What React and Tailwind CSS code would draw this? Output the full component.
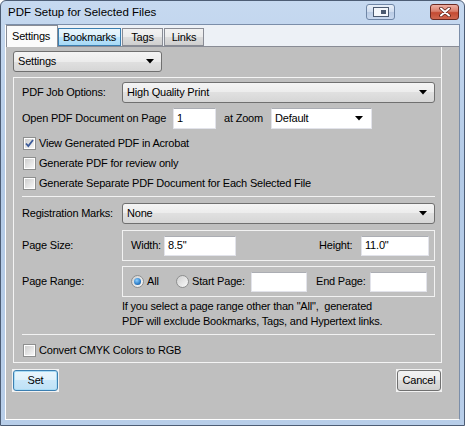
import React from 'react';

const font = "font-['Liberation_Sans',Arial,sans-serif]";

function Arrow() {
  return (
    <svg width="8" height="5" viewBox="0 0 8 5" className="shrink-0">
      <path d="M0 0h8L4 4.5z" fill="#000" />
    </svg>
  );
}

function Combo({ value, className = '' }) {
  return (
    <div
      className={`flex items-center justify-between h-[21px] pl-[4px] pr-[7px] rounded-[3px] border border-[#707070]
                  bg-[linear-gradient(#f4f4f4,#ececec_50%,#e0e0e0_50%,#d6d6d6)] ${className}`}
    >
      <span>{value}</span>
      <Arrow />
    </div>
  );
}

function Field({ value = '', className = '' }) {
  return (
    <div
      className={`h-[20px] bg-white border border-[#e2e3ea] border-t-[#abadb3] pl-[3px] flex items-center ${className}`}
    >
      {value}
    </div>
  );
}

function Check({ checked, label }) {
  return (
    <div className="flex items-center h-5">
      <div className="ml-px w-[13px] h-[13px] border border-[#8e8f8f] p-px bg-white shrink-0">
        <div className="w-full h-full bg-[linear-gradient(135deg,#cfcfcf,#f6f6f6)] flex items-center justify-center">
          {checked && (
            <svg width="9" height="9" viewBox="0 0 9 9">
              <path d="M1 4.5l2.3 2.5L8 1" fill="none" stroke="#3b5a99" strokeWidth="1.8" />
            </svg>
          )}
        </div>
      </div>
      <span className="ml-[3px]">{label}</span>
    </div>
  );
}

function Radio({ checked }) {
  return (
    <div className="w-[13px] h-[13px] rounded-full border border-[#8e8f8f] bg-[linear-gradient(135deg,#cfcfcf,#fafafa)] flex items-center justify-center shrink-0">
      {checked && (
        <div className="w-[7px] h-[7px] rounded-full bg-[radial-gradient(circle_at_40%_35%,#8fd0ff,#2b7cc7_60%,#14467f)]" />
      )}
    </div>
  );
}

function Row({ label, children, className = '' }) {
  return (
    <div className={`flex items-center ${className}`}>
      <span className="w-[100px] shrink-0">{label}</span>
      {children}
    </div>
  );
}

export default function App() {
  return (
    <div
      className={`${font} text-[11px] tracking-[-0.2px] text-black w-[465px] h-[426px] flex flex-col rounded-t-[6px] border border-[#4d5d75]
                  bg-[linear-gradient(#c6d9f0,#b3cae6_40%,#b8cee9)] px-[4px] pb-[5px]`}
    >
      {/* Title bar */}
      <div className="h-[23px] flex items-start justify-between pl-[3px] pr-px shrink-0">
        <span className="text-[11.5px] tracking-normal mt-[6px] leading-none">PDF Setup for Selected Files</span>
        <div className="flex items-start mt-[3px]">
          <div className="w-[29px] h-[16px] rounded-[3px] border border-[#6f86a6] bg-[linear-gradient(#e9f0f9,#cfdcee_50%,#b9cbe4_50%,#c8d8ee)] flex items-center justify-center">
            <svg width="16" height="10" viewBox="0 0 16 10">
              <rect x="0.5" y="0.5" width="15" height="9" fill="#f4f7fb" stroke="#4b5a70" />
              <rect x="8" y="3" width="5" height="4" fill="#4b5a70" />
            </svg>
          </div>
          <div className="ml-[35px] w-[29px] h-[16px] rounded-[3px] border border-[#6b2a22] bg-[linear-gradient(#eeb0a3,#d97d6a_45%,#c44a32_55%,#d0674f)] flex items-center justify-center">
            <svg width="12" height="10" viewBox="0 0 12 10">
              <path d="M2 1.5l8 7M10 1.5l-8 7" stroke="#5a2018" strokeWidth="3.6" strokeLinecap="round" />
              <path d="M2 1.5l8 7M10 1.5l-8 7" stroke="#fff" strokeWidth="2" strokeLinecap="round" />
            </svg>
          </div>
        </div>
      </div>

      {/* Client */}
      <div className="flex-1 flex flex-col border border-[#7b8ea9] border-b-white border-l-white">
        {/* Tabs */}
        <div className="h-[21px] bg-[#edf1f6] flex items-end shrink-0">
          <div className="relative z-10 -mb-px h-[22px] w-[52px] bg-[#fbfbfb] border border-b-0 border-[#898c95] flex items-center pl-[5px]">
            Settings
          </div>
          <div className="h-[18px] w-[63px] border border-[#3c7fb1] bg-[linear-gradient(#eaf6fd,#d9f0fc_50%,#bee6fd_50%,#a7d9f5)] flex items-center justify-center">
            Bookmarks
          </div>
          <div className="h-[18px] w-[41px] ml-px border border-[#898c95] bg-[linear-gradient(#f2f2f2,#ebebeb_50%,#dddddd_50%,#cfcfcf)] flex items-center justify-center">
            Tags
          </div>
          <div className="h-[18px] w-[40px] ml-px border border-[#898c95] bg-[linear-gradient(#f2f2f2,#ebebeb_50%,#dddddd_50%,#cfcfcf)] flex items-center justify-center">
            Links
          </div>
        </div>

        {/* Gray page */}
        <div className="flex-1 bg-[#bfbfbf] border-t border-[#898c95]">
          <div className="w-[436px] border-r border-[#f4f4f4] pt-[4px]">
            <Combo value="Settings" className="ml-[7px] w-[149px] h-[20px]" />

            {/* Group */}
            <div className="ml-[7px] mt-[5px] border border-r-0 border-[#f4f4f4] pl-[8px] pr-[6px] pt-[4px] pb-[2px]">
              <Row label="PDF Job Options:" className="h-[21px]">
                <Combo value="High Quality Print" className="flex-1" />
              </Row>

              <div className="flex items-center h-[21px] mt-[5px]">
                <span className="w-[151px] shrink-0">Open PDF Document on Page</span>
                <Field value="1" className="w-[43px] h-[21px]" />
                <span className="ml-[8px] w-[47px] shrink-0">at Zoom</span>
                <div className="w-[101px] h-[21px] bg-white border border-[#e2e3ea] border-t-[#abadb3] flex items-center justify-between pl-[3px] pr-[8px]">
                  <span>Default</span>
                  <Arrow />
                </div>
              </div>

              <div className="mt-[4px]">
                <Check checked label="View Generated PDF in Acrobat" />
                <Check label="Generate PDF for review only" />
                <Check label="Generate Separate PDF Document for Each Selected File" />
              </div>

              <div className="mt-[3px] h-px bg-[#f2f2f2]" />

              <Row label="Registration Marks:" className="h-[21px] mt-[6px]">
                <Combo value="None" className="flex-1" />
              </Row>

              <Row label="Page Size:" className="mt-[6px]">
                <div className="flex-1 h-[31px] border border-[#f2f2f2] flex items-center pl-[8px] pr-[5px]">
                  <span className="w-[33px] shrink-0">Width:</span>
                  <Field value='8.5"' className="w-[72px]" />
                  <span className="ml-auto w-[42px] shrink-0">Height:</span>
                  <Field value='11.0"' className="w-[68px]" />
                </div>
              </Row>

              <Row label="Page Range:" className="mt-[5px]">
                <div className="flex-1 h-[31px] border border-[#f2f2f2] flex items-center pl-[8px]">
                  <div className="w-[45px] flex items-center shrink-0">
                    <Radio checked />
                    <span className="ml-[3px]">All</span>
                  </div>
                  <div className="w-[75px] flex items-center shrink-0">
                    <Radio />
                    <span className="ml-[3px]">Start Page:</span>
                  </div>
                  <Field className="w-[56px]" />
                  <span className="ml-[9px] w-[54px] shrink-0">End Page:</span>
                  <Field className="w-[57px]" />
                </div>
              </Row>

              <div className="pl-[100px] mt-[2px] leading-[15px]">
                <div>If you select a page range other than "All",&nbsp; generated</div>
                <div>PDF will exclude Bookmarks, Tags, and Hypertext links.</div>
              </div>

              <div className="mt-[5px] h-px bg-[#f2f2f2]" />

              <div className="mt-[5px]">
                <Check label="Convert CMYK Colors to RGB" />
              </div>
            </div>
          </div>

          {/* Buttons */}
          <div className="w-[436px] flex justify-between items-center pl-[6px] mt-[6px]">
            <div className="p-px bg-[#f2f2f2]">
              <div className="w-[45px] h-[21px] rounded-[3px] border border-[#3c7fb1] bg-[linear-gradient(#eaf6fd,#dff1fb_50%,#c9e7f9_50%,#bfe1f6)] flex items-center justify-center shadow-[inset_0_0_0_1px_#a9dcf5]">
                Set
              </div>
            </div>
            <div className="p-px bg-[#f2f2f2]">
              <div className="w-[44px] h-[21px] rounded-[3px] border border-[#707070] bg-[linear-gradient(#f2f2f2,#ebebeb_50%,#dddddd_50%,#cfcfcf)] flex items-center justify-center">
                Cancel
              </div>
            </div>
          </div>
        </div>
      </div>
    </div>
  );
}
